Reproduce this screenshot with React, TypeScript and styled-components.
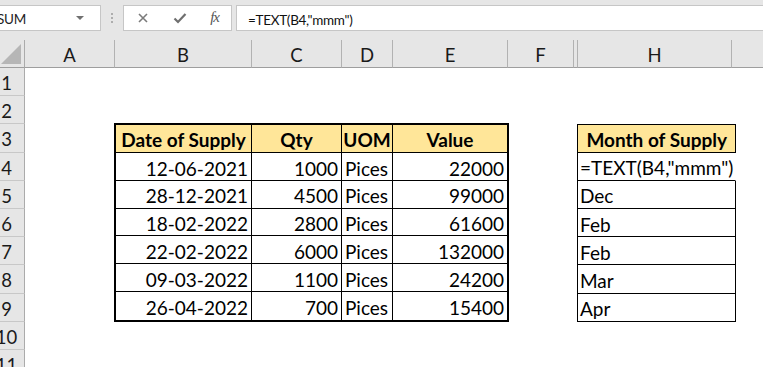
import styled, { createGlobalStyle } from "styled-components"

const GlobalStyle = createGlobalStyle`
    html, body {
        margin: 0;
        padding: 0;
        background: #ffffff;
    }
`

const columns = ['A', 'B', 'C', 'D', 'E', 'F', '', 'H', '']

const supplies = [
    { date: '12-06-2021', qty: 1000, uom: 'Pices', value: 22000 },
    { date: '28-12-2021', qty: 4500, uom: 'Pices', value: 99000 },
    { date: '18-02-2022', qty: 2800, uom: 'Pices', value: 61600 },
    { date: '22-02-2022', qty: 6000, uom: 'Pices', value: 132000 },
    { date: '09-03-2022', qty: 1100, uom: 'Pices', value: 24200 },
    { date: '26-04-2022', qty: 700, uom: 'Pices', value: 15400 },
]

const months = ['Dec', 'Feb', 'Feb', 'Mar', 'Apr']

export default function App() {
    return (
        <>
            <GlobalStyle />
            <Window>
                <FormulaBar>
                    <NameBox>
                        <span>SUM</span>
                        <DropArrow />
                    </NameBox>
                    <Grip>
                        <i /><i /><i />
                    </Grip>
                    <FxBox>
                        <svg width="12" height="12" viewBox="0 0 12 12">
                            <path d="M2 2 L10 10 M10 2 L2 10" stroke="#7b7b7b" strokeWidth="1.6" fill="none" />
                        </svg>
                        <svg width="14" height="12" viewBox="0 0 14 12">
                            <path d="M1.5 6.5 L5 10 L12.5 2" stroke="#6f6f6f" strokeWidth="2.2" fill="none" />
                        </svg>
                        <FxLabel>fx</FxLabel>
                    </FxBox>
                    <FormulaInput>=TEXT(B4,"mmm")</FormulaInput>
                </FormulaBar>

                <Sheet>
                    <Corner>
                        <svg width="20" height="20" viewBox="0 0 20 20">
                            <polygon points="20,0 20,20 0,20" fill="#b6b6b6" />
                        </svg>
                    </Corner>
                    {columns.map((c, i) => (
                        <ColHead key={i} $col={i + 2}>{c}</ColHead>
                    ))}
                    {Array.from({ length: 11 }, (_, i) => (
                        <RowHead key={i} $row={i + 2}>{i + 1}</RowHead>
                    ))}

                    <DataTable>
                        <HeadCell>Date of Supply</HeadCell>
                        <HeadCell>Qty</HeadCell>
                        <HeadCell>UOM</HeadCell>
                        <HeadCell $last>Value</HeadCell>
                        {supplies.map((s, i) => {
                            const bottom = i === supplies.length - 1
                            return [
                                <Cell key={i + 'a'} $right $bottom={bottom}>{s.date}</Cell>,
                                <Cell key={i + 'b'} $right $bottom={bottom}>{s.qty}</Cell>,
                                <Cell key={i + 'c'} $bottom={bottom}>{s.uom}</Cell>,
                                <Cell key={i + 'd'} $right $bottom={bottom} $last>{s.value}</Cell>,
                            ]
                        })}
                    </DataTable>

                    <MonthTable>
                        <MonthHead>Month of Supply</MonthHead>
                        <MonthCell $editing>=TEXT(B4,"mmm")</MonthCell>
                        {months.map((m, i) => (
                            <MonthCell key={i}>{m}</MonthCell>
                        ))}
                    </MonthTable>
                </Sheet>
            </Window>
        </>
    )
}

const Window = styled.div`
    width: 763px;
    height: 367px;
    overflow: hidden;
    background: #ffffff;
    font-family: Lato, "Open Sans", sans-serif;
`

const FormulaBar = styled.div`
    display: flex;
    align-items: flex-start;
    height: 40px;
    padding-top: 5px;
    box-sizing: border-box;
    background: #e6e6e6;
`

const NameBox = styled.div`
    display: flex;
    align-items: center;
    justify-content: space-between;
    width: 111px;
    height: 26px;
    margin-left: -10px;
    padding: 2px 16px 0 6px;
    box-sizing: border-box;
    background: #ffffff;
    border: 1px solid #c6c6c6;
    font-size: 13.5px;
    letter-spacing: -0.3px;
    color: #222222;
`

const DropArrow = styled.div`
    width: 0;
    height: 0;
    margin-top: -2px;
    border-left: 4px solid transparent;
    border-right: 4px solid transparent;
    border-top: 4px solid #707070;
`

const Grip = styled.div`
    display: flex;
    flex-direction: column;
    gap: 2px;
    width: 22px;
    align-items: center;
    padding-top: 8px;

    i {
        display: block;
        width: 2px;
        height: 2px;
        background: #adadad;
    }
`

const FxBox = styled.div`
    display: flex;
    align-items: center;
    justify-content: space-between;
    width: 109px;
    height: 26px;
    padding: 0 12px 0 13px;
    box-sizing: border-box;
    background: #ffffff;
    border: 1px solid #c6c6c6;
`

const FxLabel = styled.span`
    font-family: "Liberation Serif", serif;
    font-style: italic;
    font-size: 15px;
    color: #555555;
    letter-spacing: -1px;
    margin-top: -2px;
`

const FormulaInput = styled.div`
    flex: 1;
    display: flex;
    align-items: center;
    height: 26px;
    margin-left: 4px;
    padding: 3px 0 0 11px;
    box-sizing: border-box;
    background: #ffffff;
    border-top: 1px solid #c6c6c6;
    border-bottom: 1px solid #c6c6c6;
    border-left: 1px solid #c6c6c6;
    font-size: 13.5px;
    letter-spacing: -0.3px;
    color: #111111;
`

const Sheet = styled.div`
    display: grid;
    grid-template-columns: 25px 90px 137px 90px 51px 115px 66px 4px 154px 1fr;
    grid-template-rows: 28px repeat(11, 28.2px);
`

const Corner = styled.div`
    grid-column: 1;
    grid-row: 1;
    display: flex;
    align-items: flex-end;
    justify-content: flex-end;
    padding: 0 3px 3px 0;
    background: #e6e6e6;
    border-right: 1px solid #ababab;
    border-bottom: 1px solid #9e9e9e;
`

const ColHead = styled.div<{ $col: number }>`
    grid-column: ${p => p.$col};
    grid-row: 1;
    display: flex;
    align-items: center;
    justify-content: center;
    padding-top: 2px;
    background: #e6e6e6;
    border-right: 1px solid #b2b2b2;
    border-bottom: 1px solid #9e9e9e;
    font-size: 18.5px;
    color: #1a1a1a;
    ${p => p.$col === 10 && 'border-right: none;'}
`

const RowHead = styled.div<{ $row: number }>`
    grid-column: 1;
    grid-row: ${p => p.$row};
    display: flex;
    align-items: center;
    justify-content: center;
    padding: 3px 11px 0 0;
    background: #e6e6e6;
    border-right: 1px solid #ababab;
    border-bottom: 1px solid #c8c8c8;
    font-size: 18.5px;
    color: #1a1a1a;
    overflow: hidden;
`

const DataTable = styled.div`
    grid-column: 3 / 7;
    grid-row: 4 / 11;
    margin: -1px -1px 0 -1px;
    display: grid;
    grid-template-columns: 136px 90px 51px 1fr;
    grid-template-rows: repeat(7, 1fr);
    border: 2px solid #000000;
    font-size: 19px;
    color: #000000;
`

const HeadCell = styled.div<{ $last?: boolean }>`
    display: flex;
    align-items: center;
    justify-content: center;
    padding-top: 2px;
    background: #ffe699;
    font-weight: 700;
    white-space: nowrap;
    border-right: ${p => (p.$last ? 'none' : '1px solid #000')};
    border-bottom: 1px solid #000;
`

const Cell = styled.div<{ $right?: boolean; $last?: boolean; $bottom?: boolean }>`
    display: flex;
    align-items: center;
    justify-content: ${p => (p.$right ? 'flex-end' : 'flex-start')};
    padding: 3px 3px 0 3px;
    white-space: nowrap;
    border-right: ${p => (p.$last ? 'none' : '1px solid #000')};
    border-bottom: ${p => (p.$bottom ? 'none' : '1px solid #000')};
`

const MonthTable = styled.div`
    grid-column: 9;
    grid-row: 4 / 11;
    margin-left: -1px;
    display: grid;
    grid-template-rows: repeat(7, 1fr);
    font-size: 19px;
    color: #000000;
`

const MonthHead = styled.div`
    display: flex;
    align-items: center;
    justify-content: center;
    padding-top: 2px;
    background: #ffe699;
    font-weight: 700;
    white-space: nowrap;
    border: 1px solid #000;
`

const MonthCell = styled.div<{ $editing?: boolean }>`
    display: flex;
    align-items: center;
    padding: 3px 2px 0 2px;
    white-space: nowrap;
    border-left: 1px solid #000;
    border-right: 1px solid ${p => (p.$editing ? 'transparent' : '#000')};
    border-bottom: 1px solid #000;
    overflow: visible;
`
